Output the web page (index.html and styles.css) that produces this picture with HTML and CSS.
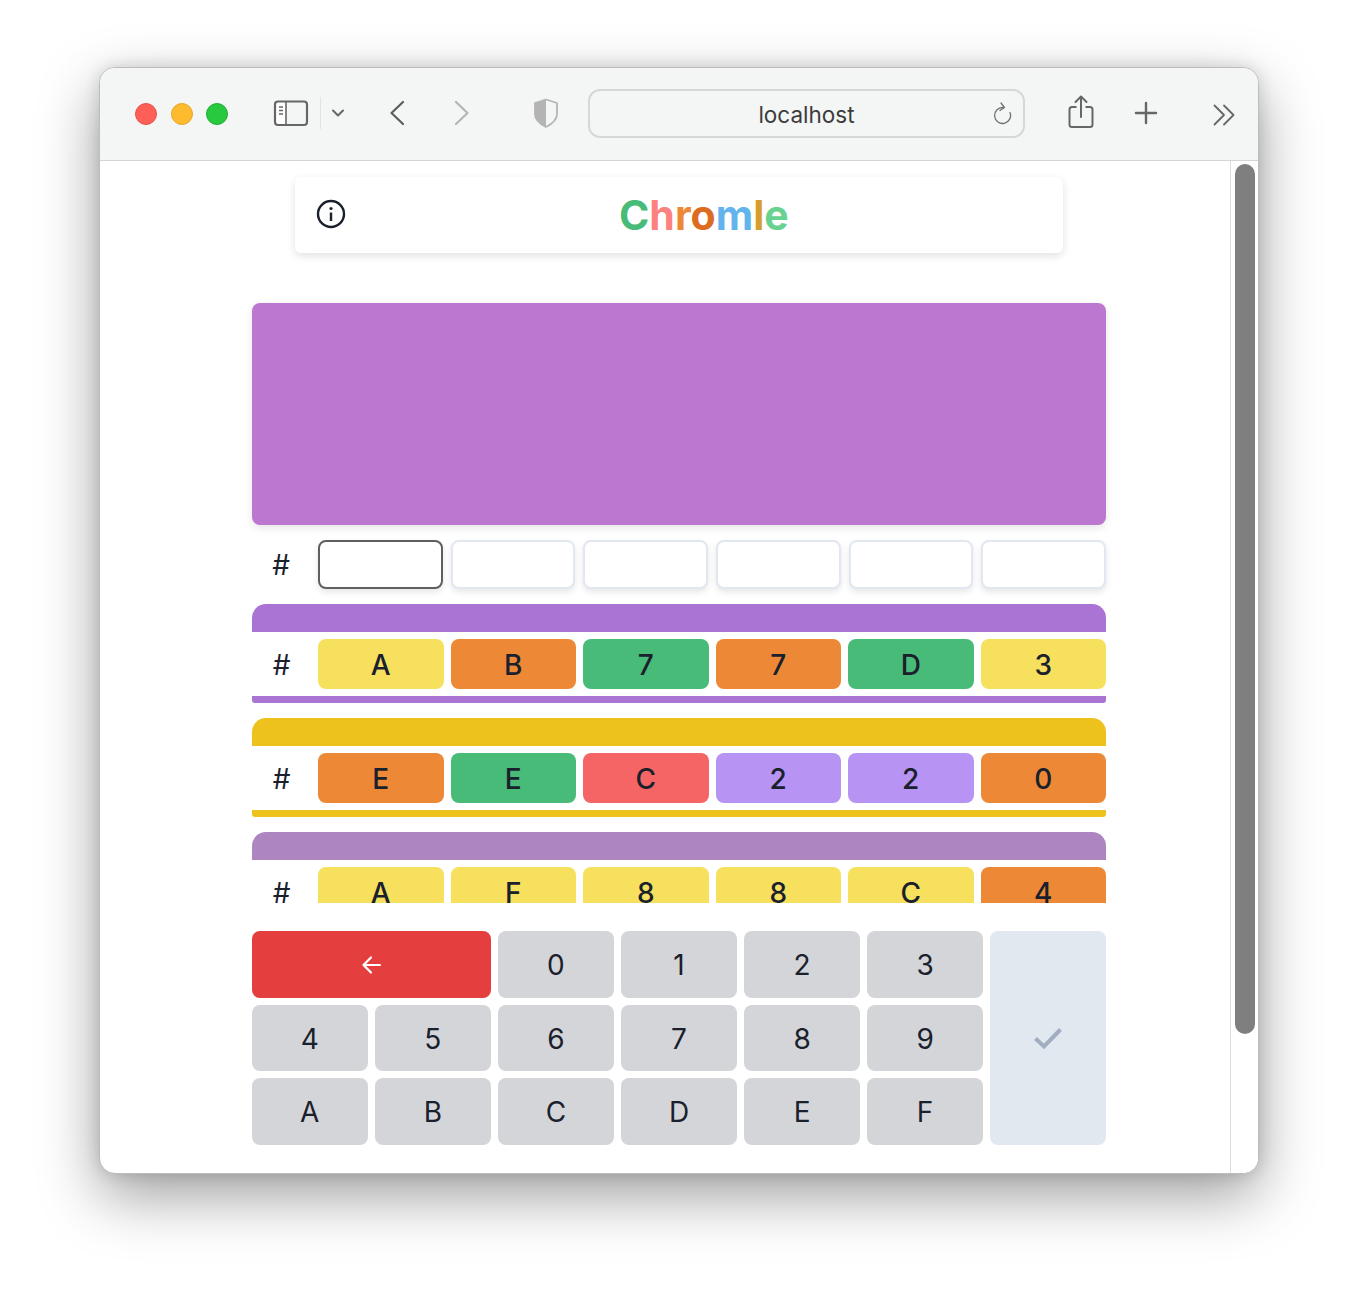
FILE: index.html
```html
<!DOCTYPE html>
<html lang="en">
<head>
    <meta charset="UTF-8">
    <meta name="viewport" content="width=device-width, initial-scale=1.0">
    <title>Chromle</title>
    <link rel="stylesheet" href="styles.css">
</head>
<body>
    <div class="window">
        <div class="toolbar">
            <div class="lights">
                <span class="light light-red"></span>
                <span class="light light-yellow"></span>
                <span class="light light-green"></span>
            </div>
            <svg class="tool tool-sidebar" width="36" height="28" viewBox="0 0 36 28" fill="none">
                <path d="M2.500 5.500a2.500 2.500 0 0 1 2.500-2.500h8v23H5a2.500 2.500 0 0 1-2.500-2.500z" fill="#fff"/>
                <rect x="2" y="2.500" width="32" height="23.500" rx="3" stroke="#666" stroke-width="2.200"/>
                <path d="M13 3v23" stroke="#666" stroke-width="1.600"/>
                <path d="M6 8h4M6 11.500h4M6 15h4" stroke="#666" stroke-width="1.500"/>
            </svg>
            <span class="tool-divider"></span>
            <svg class="tool tool-caret" width="14" height="10" viewBox="0 0 14 10" fill="none">
                <path d="M2 2.500l5 5 5-5" stroke="#666" stroke-width="2" stroke-linecap="round" stroke-linejoin="round"/>
            </svg>
            <svg class="tool tool-back" width="16" height="26" viewBox="0 0 16 26" fill="none">
                <path d="M14 2L2.500 13 14 24" stroke="#5c5c5c" stroke-width="2.200" stroke-linecap="round" stroke-linejoin="round"/>
            </svg>
            <svg class="tool tool-forward" width="16" height="26" viewBox="0 0 16 26" fill="none">
                <path d="M2 2l11.500 11L2 24" stroke="#b4b4b4" stroke-width="2.200" stroke-linecap="round" stroke-linejoin="round"/>
            </svg>
            <svg class="tool tool-shield" width="24" height="30" viewBox="0 0 24 30" fill="none">
                <path d="M12 1.500L23 5v11c0 6-5 10-11 13C6 26 1 22 1 16V5z" fill="#f4f6f6" stroke="#b4b4b4" stroke-width="1.800" stroke-linejoin="round"/>
                <path d="M12 1.500L1 5v11c0 6 5 10 11 13z" fill="#b4b4b4"/>
            </svg>
            <div class="url-bar">
                <span class="url-text">localhost</span>
                <svg class="url-reload" width="20" height="24" viewBox="0 0 20 24" fill="none">
                    <path d="M11 5.500a8 8 0 1 0 7 5" stroke="#707070" stroke-width="1.300" stroke-linecap="round"/>
                    <path d="M9 1l3.500 4.500L8 8.500" stroke="#707070" stroke-width="1.300" stroke-linecap="round" stroke-linejoin="round"/>
                </svg>
            </div>
            <svg class="tool tool-share" width="26" height="34" viewBox="0 0 26 34" fill="none">
                <path d="M8.500 12H4a2.500 2.500 0 0 0-2.500 2.500v15A2.500 2.500 0 0 0 4 32h18a2.500 2.500 0 0 0 2.500-2.500v-15A2.500 2.500 0 0 0 22 12h-4.500" stroke="#666" stroke-width="2"/>
                <path d="M13 22V2M7.500 7L13 1.500 18.500 7" stroke="#666" stroke-width="2" stroke-linecap="round" stroke-linejoin="round"/>
            </svg>
            <svg class="tool tool-plus" width="24" height="24" viewBox="0 0 24 24" fill="none">
                <path d="M12 2v20M2 12h20" stroke="#666" stroke-width="2.400" stroke-linecap="round"/>
            </svg>
            <svg class="tool tool-more" width="22" height="22" viewBox="0 0 22 22" fill="none">
                <path d="M1.500 1.500L11 11l-9.500 9.500M11 1.500l9.500 9.500-9.500 9.500" stroke="#666" stroke-width="1.800" stroke-linecap="round" stroke-linejoin="round"/>
            </svg>
        </div>

        <div class="viewport">
            <div class="page">
                <header class="topbar">
                    <svg class="info-icon" width="30" height="30" viewBox="0 0 30 30" fill="none">
                        <circle cx="15" cy="15" r="13" stroke="#1a202c" stroke-width="2.400"/>
                        <circle cx="15" cy="9.500" r="1.600" fill="#1a202c"/>
                        <path d="M15 13.500v8.500" stroke="#1a202c" stroke-width="2.400"/>
                    </svg>
                    <h1 class="logo"><span class="c-green">C</span><span class="c-pink">h</span><span class="c-orange">r</span><span class="c-rust">o</span><span class="c-blue">m</span><span class="c-gold">l</span><span class="c-mint">e</span></h1>
                </header>

                <main class="game">
                    <div class="target"></div>

                    <div class="guess-row guess-current">
                        <span class="hash">#</span>
                        <span class="cell cell-active"></span>
                        <span class="cell"></span>
                        <span class="cell"></span>
                        <span class="cell"></span>
                        <span class="cell"></span>
                        <span class="cell"></span>
                    </div>

                    <div class="history">
                        <section class="attempt attempt-violet">
                            <div class="attempt-top"></div>
                            <div class="guess-row">
                                <span class="hash">#</span>
                                <span class="tile yellow">A</span>
                                <span class="tile orange">B</span>
                                <span class="tile green">7</span>
                                <span class="tile orange">7</span>
                                <span class="tile green">D</span>
                                <span class="tile yellow">3</span>
                            </div>
                            <div class="attempt-bottom"></div>
                        </section>
                        <section class="attempt attempt-amber">
                            <div class="attempt-top"></div>
                            <div class="guess-row">
                                <span class="hash">#</span>
                                <span class="tile orange">E</span>
                                <span class="tile green">E</span>
                                <span class="tile red">C</span>
                                <span class="tile purple">2</span>
                                <span class="tile purple">2</span>
                                <span class="tile orange">0</span>
                            </div>
                            <div class="attempt-bottom"></div>
                        </section>
                        <section class="attempt attempt-mauve">
                            <div class="attempt-top"></div>
                            <div class="guess-row">
                                <span class="hash">#</span>
                                <span class="tile yellow">A</span>
                                <span class="tile yellow">F</span>
                                <span class="tile yellow">8</span>
                                <span class="tile yellow">8</span>
                                <span class="tile yellow">C</span>
                                <span class="tile orange">4</span>
                            </div>
                            <div class="attempt-bottom"></div>
                        </section>
                    </div>

                    <div class="keypad">
                        <button class="key key-back">
                            <svg width="22" height="22" viewBox="0 0 22 22" fill="none">
                                <path d="M20 11H3.500M11 3.500L3.500 11l7.500 7.500" stroke="#fff" stroke-width="2.200" stroke-linecap="round" stroke-linejoin="round"/>
                            </svg>
                        </button>
                        <button class="key">0</button>
                        <button class="key">1</button>
                        <button class="key">2</button>
                        <button class="key">3</button>
                        <button class="key key-enter">
                            <svg width="30" height="22" viewBox="0 0 30 22" fill="none">
                                <path d="M2.500 10.500L11 18.500 27.500 1.500" stroke="#a0aec0" stroke-width="4"/>
                            </svg>
                        </button>
                        <button class="key">4</button>
                        <button class="key">5</button>
                        <button class="key">6</button>
                        <button class="key">7</button>
                        <button class="key">8</button>
                        <button class="key">9</button>
                        <button class="key">A</button>
                        <button class="key">B</button>
                        <button class="key">C</button>
                        <button class="key">D</button>
                        <button class="key">E</button>
                        <button class="key">F</button>
                    </div>
                </main>
            </div>
            <div class="scrollbar">
                <div class="scroll-thumb"></div>
            </div>
        </div>
    </div>
</body>
</html>
```

FILE: styles.css
```css
:root {
    --text-color: #1a202c;
    --key-color: #d3d5d9;
    --toolbar-color: #f4f6f6;
}

* {
    box-sizing: border-box;
}

body {
    margin: 0;
    height: 1305px;
    padding: 67px 99px 0;
    background-color: #fff;
    font-family: 'Inter', 'Liberation Sans', sans-serif;
    color: var(--text-color);
    overflow: hidden;
}

.window {
    height: 1107px;
    border-radius: 16px;
    border: 1px solid #bdbdbd;
    background-color: #fff;
    overflow: hidden;
    box-shadow: 0 22px 60px rgba(0, 0, 0, 0.38), 0 0 16px rgba(0, 0, 0, 0.14);
}

/* browser chrome */
.toolbar {
    display: flex;
    align-items: center;
    height: 93px;
    padding-left: 35px;
    background-color: var(--toolbar-color);
    border-bottom: 1px solid #d4d6d6;
}

.lights {
    display: flex;
    gap: 13.5px;
}

.light {
    width: 22px;
    height: 22px;
    border-radius: 50%;
}

.light-red {
    background-color: #fe5f57;
    border: 1px solid #e5524b;
}

.light-yellow {
    background-color: #febb2e;
    border: 1px solid #e5a626;
}

.light-green {
    background-color: #28c83f;
    border: 1px solid #20ad33;
}

.tool {
    flex: none;
}

.tool-sidebar {
    margin-left: 45px;
    margin-top: -2px;
}

.tool-divider {
    width: 1px;
    height: 32px;
    margin-left: 11px;
    margin-top: -2px;
    background-color: #e2e3e3;
}

.tool-caret {
    margin-left: 10px;
    margin-top: -2px;
}

.tool-back {
    margin-left: 44px;
    margin-top: -2px;
}

.tool-forward {
    margin-left: 49px;
    margin-top: -2px;
}

.tool-shield {
    margin-left: 64px;
    margin-top: -2px;
}

.url-bar {
    position: relative;
    flex: none;
    width: 437px;
    height: 49px;
    margin-left: 30px;
    margin-top: -2px;
    padding-top: 2px;
    display: flex;
    align-items: center;
    justify-content: center;
    border: 2px solid #d6d8d8;
    border-radius: 12px;
    font-size: 22.500px;
    color: #3c3c3c;
}

.url-reload {
    position: absolute;
    right: 11px;
    top: 11px;
}

.tool-share {
    margin-left: 43px;
    margin-top: -4px;
}

.tool-plus {
    margin-left: 40px;
    margin-top: -2px;
}

.tool-more {
    margin-left: 55px;
    margin-top: 2px;
}

/* page area */
.viewport {
    display: flex;
    height: 1012px;
}

.page {
    flex: 1;
    padding: 16px 0 0 152px;
    border-right: 1px solid #ddd;
}

.topbar {
    display: flex;
    align-items: center;
    width: 768px;
    height: 76px;
    margin-left: 43px;
    padding-left: 21px;
    background-color: #fff;
    border-radius: 6px;
    box-shadow: 0 3px 8px rgba(0, 0, 0, 0.12);
}

.info-icon {
    flex: none;
    margin-top: -2px;
}

.logo {
    margin: 0 0 0 273px;
    font-size: 41px;
    line-height: 76px;
    font-weight: 700;
}

.c-green { color: #48bb78; }
.c-pink { color: #fc8181; }
.c-orange { color: #ed8936; }
.c-rust { color: #dd6b20; }
.c-blue { color: #63b3ed; }
.c-gold { color: #d69e2e; }
.c-mint { color: #68d391; }

.game {
    width: 854px;
    margin-top: 50px;
}

.target {
    height: 222px;
    background-color: #bc78d0;
    border-radius: 8px;
    box-shadow: 0 3px 8px rgba(0, 0, 0, 0.1);
}

.guess-row {
    display: flex;
    align-items: center;
    gap: 7px;
    height: 50px;
}

.guess-current {
    gap: 7.800px;
    height: 49px;
    margin-top: 15px;
}

.hash {
    flex: none;
    width: 59px;
    padding-top: 2px;
    text-align: center;
    font-size: 28px;
    line-height: 50px;
}

.guess-current .hash {
    width: 58.200px;
    padding-top: 0;
}

.cell,
.tile {
    flex: 1;
    height: 50px;
    border-radius: 8px;
}

.cell {
    height: 49px;
    background-color: #fff;
    border: 2px solid #e2e8f0;
    box-shadow: 0 3px 6px rgba(0, 0, 0, 0.1);
}

.cell-active {
    border-color: #5f5f5f;
}

.tile {
    display: flex;
    align-items: center;
    justify-content: center;
    padding-top: 2px;
    font-size: 28px;
    font-weight: 550;
}

.yellow { background-color: #f6e05e; }
.orange { background-color: #ed8936; }
.green { background-color: #48bb78; }
.red { background-color: #f56565; }
.purple { background-color: #b794f4; }

.history {
    height: 299px;
    margin-top: 15px;
    overflow: hidden;
}

.attempt {
    margin-bottom: 15px;
}

.attempt .guess-row {
    margin-top: 7px;
}

.attempt-top {
    height: 28px;
    border-radius: 14px 14px 0 0;
}

.attempt-bottom {
    height: 7px;
    margin-top: 7px;
    border-radius: 0 0 3px 3px;
}

.attempt-violet .attempt-top,
.attempt-violet .attempt-bottom {
    background-color: #a974d3;
}

.attempt-amber .attempt-top,
.attempt-amber .attempt-bottom {
    background-color: #eec21c;
}

.attempt-mauve .attempt-top,
.attempt-mauve .attempt-bottom {
    background-color: #ad85c0;
}

.keypad {
    display: grid;
    grid-template-columns: repeat(7, 1fr);
    grid-auto-rows: 66.500px;
    gap: 7px 7.500px;
    margin-top: 28px;
}

.key {
    display: flex;
    align-items: center;
    justify-content: center;
    padding: 2px 0 0;
    border: none;
    border-radius: 8px;
    background-color: var(--key-color);
    color: var(--text-color);
    font-family: inherit;
    font-size: 28px;
    font-weight: 400;
}

.key-back {
    grid-column: span 2;
    background-color: #e53e3e;
}

.key-enter {
    grid-column: 7;
    grid-row: 1 / span 3;
    background-color: #e2e8f0;
}

/* scrollbar */
.scrollbar {
    flex: none;
    width: 27px;
    padding: 3px 3px 0 4px;
    background-color: #fff;
}

.scroll-thumb {
    height: 870px;
    background-color: #7f7f7f;
    border-radius: 10px;
}
```
